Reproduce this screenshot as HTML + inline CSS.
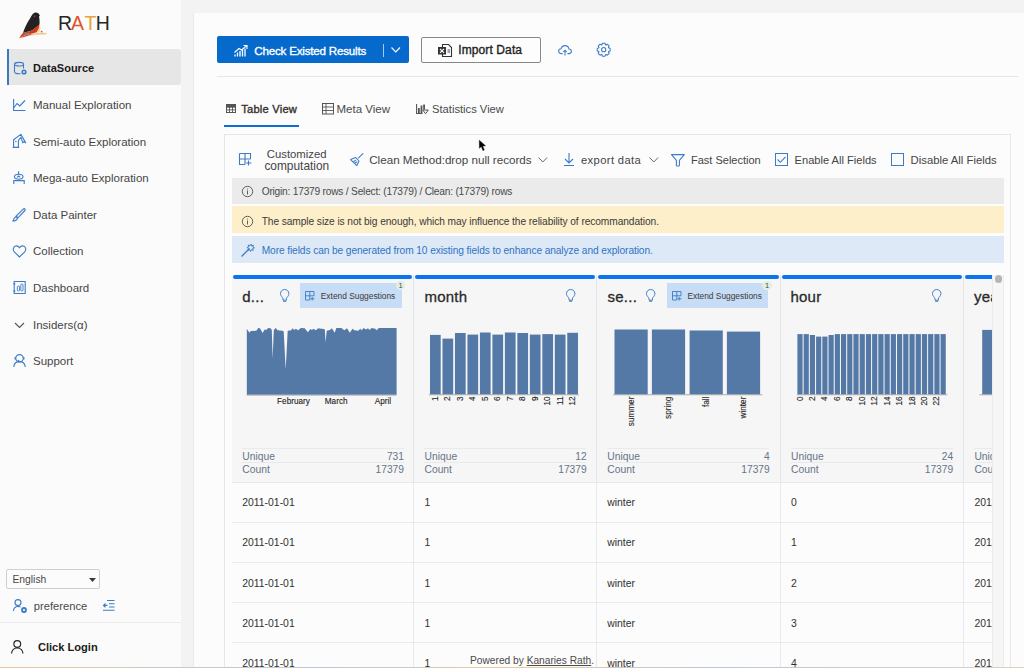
<!DOCTYPE html><html><head><meta charset="utf-8"><style>
html,body{margin:0;padding:0;width:1024px;height:668px;overflow:hidden;background:#f3f3f3;font-family:"Liberation Sans",sans-serif;}
.a{position:absolute;box-sizing:border-box;}
.t{position:absolute;line-height:1;white-space:nowrap;}
svg{position:absolute;overflow:visible;}
</style></head><body>
<div class="a" style="left:0.00px;top:0.00px;width:181.30px;height:668.00px;background:#fbfbfb;"></div>
<svg style="left:14.00px;top:8.00px;" width="36" height="34" viewBox="0 0 36 34"><path d="M15.5 26.5 C20 25.2 26 24.3 33.5 25.2 L31 26.5 L22 26.8 L14 28Z" fill="#efc98f"/>
<path d="M20.5 4.8 C22.5 4.2 24.5 5 25 6.3 L25.9 7.8 L25 8.6 C25.6 11 25.7 14 25.5 16.8 L18 22.5 L9 25 C10 21 13 15 16 10.5 C17.5 7.8 18.8 5.5 20.5 4.8Z" fill="#252122"/>
<path d="M25.5 16.3 C25.7 19 25.5 22 24 24 L18 25.5 L10 27.5 L5.5 29.8 C6.5 27.8 8 26 9 25 L18 22.5 Z" fill="#cf3a1d"/>
<path d="M25.5 15.5 C26.8 18 26.8 21.5 25.3 24 L21.5 25.8 L23.8 22 C25 20 25.5 18 25.5 15.5Z" fill="#f2d6a0"/>
<path d="M4.8 30 L11 27.2 L19.5 25.3 L15 27.5 L8.5 29.5 Z" fill="#de4b22"/>
<ellipse cx="13" cy="25.8" rx="3" ry="0.9" fill="#7d8795" transform="rotate(-12 13 25.8)"/>
<circle cx="27.6" cy="23.6" r="0.9" fill="#d9502a"/>
<circle cx="20.5" cy="8.3" r="0.7" fill="#c9441e"/></svg>
<div class="t" style="left:57.90px;top:14.29px;font-size:19.5px;color:#262626;font-weight:normal;">R</div>
<div class="t" style="left:71.00px;top:14.29px;font-size:19.5px;color:#e0522c;font-weight:normal;">A</div>
<div class="t" style="left:84.60px;top:14.29px;font-size:19.5px;color:#e9a23b;font-weight:normal;">T</div>
<div class="t" style="left:95.70px;top:14.29px;font-size:19.5px;color:#262626;font-weight:normal;">H</div>
<div class="a" style="left:6.60px;top:49.30px;width:174.00px;height:36.20px;background:#e6e6e6;border-radius:0 3px 3px 0;"></div>
<div class="a" style="left:6.60px;top:49.30px;width:2.20px;height:36.20px;background:#3b78c2;"></div>
<div class="t" style="left:33.00px;top:62.99px;font-size:11px;color:#1b1a19;font-weight:bold;">DataSource</div>
<svg style="left:13.50px;top:61.80px;" width="13" height="12" viewBox="0 0 13 12"><ellipse cx="5" cy="2.2" rx="4.5" ry="1.8" fill="none" stroke="#3b7cc9" stroke-width="1.1"/><path d="M0.5 2.2 V9.8 C0.5 11 2.5 11.8 5 11.8 L6.5 11.7 M9.5 2.2 V6.5" fill="none" stroke="#3b7cc9" stroke-width="1.1"/><circle cx="10" cy="10" r="1.8" fill="none" stroke="#3b7cc9" stroke-width="1.6"/></svg>
<div class="t" style="left:33.00px;top:99.97px;font-size:11.5px;color:#464544;font-weight:normal;">Manual Exploration</div>
<svg style="left:12.90px;top:98.60px;" width="13" height="12" viewBox="0 0 13 12"><path d="M0.6 0 V11.5 H12.5 M0.6 9 L4 4.5 L6.8 7 L12 1.5" fill="none" stroke="#3b7cc9" stroke-width="1.1"/></svg>
<div class="t" style="left:33.00px;top:136.57px;font-size:11.5px;color:#464544;font-weight:normal;">Semi-auto Exploration</div>
<svg style="left:12.90px;top:134.20px;" width="13" height="13" viewBox="0 0 13 13"><path d="M-0.3 13.4 H6.2 M0.6 13.4 V5.8 L7.8 0.4 L12.6 8.6 M5.4 13.4 V6.3 L7.9 3.4 L9.8 8.6 M9.2 9 L11 7.8 L13 9" fill="none" stroke="#3b7cc9" stroke-width="1.1" stroke-linejoin="round"/><circle cx="2.9" cy="7.6" r="0.75" fill="#3b7cc9"/></svg>
<div class="t" style="left:33.00px;top:173.17px;font-size:11.5px;color:#464544;font-weight:normal;">Mega-auto Exploration</div>
<svg style="left:12.90px;top:171.00px;" width="12" height="13" viewBox="0 0 12 13"><path d="M5.6 0.3 V2.9 M0.8 13 V9.6 H11.2 V13 M4 6.4 L5.6 5 L7.2 6.4" fill="none" stroke="#3b7cc9" stroke-width="1.1"/><ellipse cx="5.7" cy="5.8" rx="4.3" ry="2.5" fill="none" stroke="#3b7cc9" stroke-width="1.1"/></svg>
<div class="t" style="left:33.00px;top:209.77px;font-size:11.5px;color:#464544;font-weight:normal;">Data Painter</div>
<svg style="left:12.90px;top:207.50px;" width="13" height="13" viewBox="0 0 13 13"><path d="M11.8 0.8 C12.5 1.5 12 2.5 11 3.5 L5 9.8 L3.2 8 L9.5 1.8 C10.3 1 11.2 0.3 11.8 0.8Z M3 8.5 L4.5 10 C4 12 2 13 0 13 C0.5 11.5 1.2 9.5 3 8.5Z" fill="none" stroke="#3b7cc9" stroke-width="1.1"/></svg>
<div class="t" style="left:33.00px;top:246.37px;font-size:11.5px;color:#464544;font-weight:normal;">Collection</div>
<svg style="left:12.90px;top:244.80px;" width="13" height="12" viewBox="0 0 13 12"><path d="M6.5 12 L1.3 6.8 C-0.3 5.2 0 2.3 2 1.3 C3.8 0.4 5.5 1.2 6.5 2.7 C7.5 1.2 9.2 0.4 11 1.3 C13 2.3 13.3 5.2 11.7 6.8Z" fill="none" stroke="#3b7cc9" stroke-width="1.1"/></svg>
<div class="t" style="left:33.00px;top:282.97px;font-size:11.5px;color:#464544;font-weight:normal;">Dashboard</div>
<svg style="left:13.10px;top:280.50px;" width="13" height="13" viewBox="0 0 13 13"><path d="M1.2 0.5 H12.2 V12.5 H1.2Z M0 3 H2.5 M0 10 H2.5" fill="none" stroke="#3b7cc9" stroke-width="1.1"/><rect x="4.3" y="5" width="2.2" height="5" rx="1" fill="none" stroke="#3b7cc9" stroke-width="0.9"/><rect x="7.8" y="3" width="2.2" height="7" rx="1" fill="none" stroke="#3b7cc9" stroke-width="0.9"/></svg>
<div class="t" style="left:33.00px;top:319.57px;font-size:11.5px;color:#464544;font-weight:normal;">Insiders(α)</div>
<svg style="left:13.50px;top:322.00px;" width="11" height="7" viewBox="0 0 11 7"><path d="M1 1 L5.5 5.5 L10 1" fill="none" stroke="#555" stroke-width="1.1"/></svg>
<div class="t" style="left:33.00px;top:356.17px;font-size:11.5px;color:#464544;font-weight:normal;">Support</div>
<svg style="left:12.90px;top:354.00px;" width="13" height="13" viewBox="0 0 13 13"><path d="M0.8 13 C1 9.5 3.5 7.6 6.5 7.6 C9.5 7.6 12 9.5 12.2 13" fill="none" stroke="#3b7cc9" stroke-width="1.1"/><circle cx="6.5" cy="4.3" r="3.7" fill="none" stroke="#3b7cc9" stroke-width="1.1"/><path d="M2.2 3 V5.6 M10.8 3 V5.6 M6.5 7.6 L4.8 6.2" stroke="#3b7cc9" stroke-width="1.3"/></svg>
<div class="a" style="left:6.20px;top:568.80px;width:93.80px;height:20.00px;border:1px solid #cfcfcf;background:#fcfcfc;border-radius:2px;"></div>
<div class="t" style="left:12.50px;top:574.58px;font-size:10.3px;color:#4a4a4a;font-weight:normal;">English</div>
<svg style="left:88.50px;top:577.50px;" width="7" height="4" viewBox="0 0 7 4"><path d="M0 0 H7 L3.5 4Z" fill="#3a3a3a"/></svg>
<svg style="left:12.50px;top:598.80px;" width="14" height="14" viewBox="0 0 14 14"><circle cx="5" cy="3.6" r="3" fill="none" stroke="#3b7cc9" stroke-width="1.1"/><path d="M0.5 12 C0.7 8.8 2.5 7.5 5 7.5 C6 7.5 7 7.7 7.6 8.2" fill="none" stroke="#3b7cc9" stroke-width="1.1"/><circle cx="11" cy="11" r="2" fill="none" stroke="#3b7cc9" stroke-width="1.8"/></svg>
<div class="t" style="left:33.80px;top:600.82px;font-size:11.2px;color:#4a4a4a;font-weight:normal;">preference</div>
<svg style="left:102.50px;top:600.00px;" width="12" height="11" viewBox="0 0 12 11"><path d="M4 0.5 H11.5 M6 3.8 H11.5 M6 7 H11.5 M0 10.3 H11.5 M0.5 5.4 H4.5 M2.5 3.5 L0.5 5.4 L2.5 7.3" fill="none" stroke="#3b7cc9" stroke-width="1.1"/></svg>
<div class="a" style="left:0.00px;top:621.50px;width:181.30px;height:1.00px;background:#ebebeb;"></div>
<svg style="left:11.20px;top:640.00px;" width="13" height="14" viewBox="0 0 13 14"><circle cx="6.25" cy="4" r="3.4" fill="none" stroke="#2b2b2b" stroke-width="1.2"/><path d="M0.5 13.5 C1 9.8 3.3 8 6.25 8 C9.2 8 11.5 9.8 12 13.5" fill="none" stroke="#2b2b2b" stroke-width="1.2"/></svg>
<div class="t" style="left:37.90px;top:641.90px;font-size:11.1px;color:#1b1a19;font-weight:bold;">Click Login</div>
<div class="a" style="left:193.30px;top:13.00px;width:830.70px;height:655.00px;background:#fcfcfc;border-left:1px solid #e9e9e9;"></div>
<div class="a" style="left:217.30px;top:36.40px;width:191.70px;height:26.40px;background:#066acd;border-radius:2px;"></div>
<svg style="left:233.50px;top:44.50px;" width="14" height="12" viewBox="0 0 14 12"><path d="M1 11.5 V9.5 M3.5 11.5 V7.5 M6 11.5 V6 M8.5 11.5 V4.5 M11 11.5 V3.5" stroke="#fff" stroke-width="1.3"/><path d="M0.5 7.5 L5 3.5 L7.5 5 L12.5 0.8 M9.5 0.5 H13 V4" fill="none" stroke="#fff" stroke-width="1.1"/></svg>
<div class="t" style="left:254.30px;top:44.88px;font-size:11.6px;color:#ffffff;font-weight:normal;letter-spacing:-0.2px;-webkit-text-stroke:0.35px #fff;">Check Existed Results</div>
<div class="a" style="left:382.50px;top:43.50px;width:1.20px;height:13.00px;background:#a9c9ee;"></div>
<svg style="left:391.40px;top:47.00px;" width="9.5" height="5.5" viewBox="0 0 9.5 5.5"><path d="M0.5 0.5 L4.75 5 L9 0.5" fill="none" stroke="#fff" stroke-width="1.1"/></svg>
<div class="a" style="left:421.00px;top:36.60px;width:119.50px;height:26.60px;border:1px solid #8a8886;border-radius:2px;background:#fdfdfd;"></div>
<svg style="left:438.00px;top:43.50px;" width="14" height="13" viewBox="0 0 14 13"><path d="M4.5 0.5 H10.5 L13.5 3.5 V12.5 H4.5Z" fill="none" stroke="#333" stroke-width="1.1"/><rect x="0" y="3" width="8" height="7.5" fill="#333"/><path d="M2 4.8 L6 8.8 M6 4.8 L2 8.8" stroke="#fff" stroke-width="1.2"/><path d="M9.5 6 H12 M9.5 8 H12" stroke="#333" stroke-width="0.9"/></svg>
<div class="t" style="left:458.30px;top:44.24px;font-size:12px;color:#201f1e;font-weight:normal;letter-spacing:0.1px;-webkit-text-stroke:0.35px #201f1e;">Import Data</div>
<svg style="left:558.20px;top:45.20px;" width="14" height="10.5" viewBox="0 0 14 10.5"><path d="M4.6 8.6 H3.2 C1.7 8.6 0.6 7.5 0.6 6.1 C0.6 4.7 1.7 3.7 3.1 3.7 C3.5 1.8 5.1 0.6 7 0.6 C9.1 0.6 10.7 2.1 10.9 4 C12.3 4.1 13.4 5 13.4 6.3 C13.4 7.6 12.4 8.6 11 8.6 H9.4 M7 10.5 V5.3 M5.2 7 L7 5.2 L8.8 7" fill="none" stroke="#3b7cc9" stroke-width="1.05"/></svg>
<svg style="left:597.00px;top:43.20px;" width="13.4" height="13.4" viewBox="0 0 13.4 13.4"><path d="M11.57 4.87 L13.17 5.39 L13.17 8.01 L11.57 8.53 L11.44 8.85 L12.20 10.35 L10.35 12.20 L8.85 11.44 L8.53 11.57 L8.01 13.17 L5.39 13.17 L4.87 11.57 L4.55 11.44 L3.05 12.20 L1.20 10.35 L1.96 8.85 L1.83 8.53 L0.23 8.01 L0.23 5.39 L1.83 4.87 L1.96 4.55 L1.20 3.05 L3.05 1.20 L4.55 1.96 L4.87 1.83 L5.39 0.23 L8.01 0.23 L8.53 1.83 L8.85 1.96 L10.35 1.20 L12.20 3.05 L11.44 4.55Z" fill="none" stroke="#3b7cc9" stroke-width="1.05" stroke-linejoin="round"/><circle cx="6.7" cy="6.7" r="2.1" fill="none" stroke="#3b7cc9" stroke-width="1.05"/></svg>
<div class="a" style="left:217.00px;top:76.30px;width:801.00px;height:1.00px;background:#e6e6e6;"></div>
<svg style="left:226.00px;top:104.00px;" width="10" height="9" viewBox="0 0 10 9"><rect x="0.5" y="0.5" width="9" height="8" fill="none" stroke="#555" stroke-width="1"/><path d="M0.5 3.2 H9.5 M0.5 5.9 H9.5 M3.5 0.5 V8.5 M6.5 0.5 V8.5" stroke="#555" stroke-width="0.9"/><rect x="0.5" y="0.5" width="9" height="2.7" fill="#555"/></svg>
<div class="t" style="left:241.20px;top:103.52px;font-size:11.2px;color:#323130;font-weight:normal;letter-spacing:0.2px;-webkit-text-stroke:0.35px #323130;">Table View</div>
<div class="a" style="left:223.90px;top:125.30px;width:75.00px;height:2.00px;background:#0f6cd0;"></div>
<svg style="left:321.50px;top:102.50px;" width="12" height="11.5" viewBox="0 0 12 11.5"><rect x="0.5" y="0.5" width="11" height="10.5" fill="none" stroke="#555" stroke-width="1"/><path d="M0.5 4 H11.5 M0.5 7.5 H11.5 M4 0.5 V11" stroke="#555" stroke-width="0.9"/></svg>
<div class="t" style="left:336.50px;top:103.77px;font-size:11.5px;color:#4a4a4a;font-weight:normal;">Meta View</div>
<svg style="left:416.00px;top:104.00px;" width="12.5" height="10" viewBox="0 0 12.5 10"><path d="M0.6 0 V9.5 H6.5" fill="none" stroke="#555" stroke-width="1.1"/><rect x="2" y="4" width="1.8" height="5" fill="#555"/><rect x="4.6" y="1.5" width="1.8" height="7.5" fill="#555"/><rect x="7.2" y="0.5" width="1.8" height="5" fill="#555"/><path d="M6.8 6 H12.3 L9.55 9.8Z" fill="none" stroke="#555" stroke-width="1"/></svg>
<div class="t" style="left:432.00px;top:103.82px;font-size:11.2px;color:#4a4a4a;font-weight:normal;">Statistics View</div>
<div class="a" style="left:224.30px;top:133.50px;width:787.00px;height:540.00px;border:1px solid #e6e6e6;background:#fcfcfc;"></div>
<svg style="left:239.10px;top:153.00px;" width="13" height="13" viewBox="0 0 13 13"><path d="M0.5 0.5 H11.5 V6 M0.5 0.5 V11.5 H6 M6 0.5 V11.5 M0.5 6 H11.5 M9.5 7.5 V12.5 M7 10 H12.5" fill="none" stroke="#3b7cc9" stroke-width="1.1"/></svg>
<div class="t" style="left:266.80px;top:149.23px;font-size:11.3px;color:#444444;font-weight:normal;">Customized</div>
<div class="t" style="left:264.40px;top:160.53px;font-size:11.9px;color:#444444;font-weight:normal;">computation</div>
<svg style="left:349.50px;top:153.00px;" width="13.5" height="13" viewBox="0 0 13.5 13"><path d="M13.2 0.3 L8 5.3 M5.6 4.6 L9 8 L6.8 12.6 L0.6 6.6 Z M3.2 8.8 L6 7.3 M4.6 10.3 L7.2 8.8" fill="none" stroke="#3b7cc9" stroke-width="1.05" stroke-linejoin="round"/></svg>
<div class="t" style="left:369.20px;top:154.24px;font-size:11.65px;color:#444444;font-weight:normal;">Clean Method:drop null records</div>
<svg style="left:538.40px;top:157.20px;" width="9.6" height="5.5" viewBox="0 0 9.6 5.5"><path d="M0.5 0.5 L4.8 5 L9.1 0.5" fill="none" stroke="#666" stroke-width="1"/></svg>
<svg style="left:563.80px;top:153.00px;" width="10" height="13" viewBox="0 0 10 13"><path d="M5 0 V10 M1 6 L5 10 L9 6 M0 12.5 H10" fill="none" stroke="#3b7cc9" stroke-width="1.1"/></svg>
<div class="t" style="left:581.00px;top:155.32px;font-size:11.2px;color:#444444;font-weight:normal;letter-spacing:0.38px;">export data</div>
<svg style="left:648.90px;top:157.20px;" width="9.6" height="5.5" viewBox="0 0 9.6 5.5"><path d="M0.5 0.5 L4.8 5 L9.1 0.5" fill="none" stroke="#666" stroke-width="1"/></svg>
<svg style="left:671.20px;top:153.50px;" width="13.8" height="12.5" viewBox="0 0 13.8 12.5"><path d="M0.5 0.6 H13.3 L8.4 6.3 V11.3 Q8.4 12 7.7 12 H6.1 Q5.4 12 5.4 11.3 V6.3 Z" fill="none" stroke="#3b7cc9" stroke-width="1.1" stroke-linejoin="round"/></svg>
<div class="t" style="left:691.00px;top:154.79px;font-size:11px;color:#444444;font-weight:normal;">Fast Selection</div>
<div class="a" style="left:774.70px;top:152.70px;width:13.70px;height:13.70px;border:1px solid #3b7cc9;"></div>
<svg style="left:777.00px;top:156.00px;" width="9" height="7" viewBox="0 0 9 7"><path d="M0.5 3.5 L3.3 6.3 L8.5 0.8" fill="none" stroke="#3b7cc9" stroke-width="1.1"/></svg>
<div class="t" style="left:794.60px;top:154.70px;font-size:11.1px;color:#444444;font-weight:normal;">Enable All Fields</div>
<div class="a" style="left:890.70px;top:152.70px;width:13.60px;height:13.70px;border:1px solid #3b7cc9;"></div>
<div class="t" style="left:910.60px;top:154.53px;font-size:11.3px;color:#444444;font-weight:normal;">Disable All Fields</div>
<div class="a" style="left:231.70px;top:178.10px;width:772.00px;height:26.20px;background:#ebebec;"></div>
<svg style="left:241.30px;top:186.00px;" width="13" height="11" viewBox="0 0 13 11"><circle cx="6.5" cy="5.5" r="5.2" fill="none" stroke="#605e5c" stroke-width="1"/><path d="M6.5 4.5 V8.5" stroke="#605e5c" stroke-width="1"/><circle cx="6.5" cy="3" r="0.6" fill="#605e5c"/></svg>
<div class="t" style="left:261.70px;top:187.37px;font-size:10.2px;color:#4a4a4a;font-weight:normal;letter-spacing:-0.22px;">Origin: 17379 rows / Select: (17379) / Clean: (17379) rows</div>
<div class="a" style="left:231.70px;top:206.30px;width:772.00px;height:27.10px;background:#fcefc9;"></div>
<svg style="left:241.30px;top:215.50px;" width="13" height="11" viewBox="0 0 13 11"><circle cx="6.5" cy="5.5" r="5.2" fill="none" stroke="#605e5c" stroke-width="1"/><path d="M6.5 4.5 V8.5" stroke="#605e5c" stroke-width="1"/><circle cx="6.5" cy="3" r="0.6" fill="#605e5c"/></svg>
<div class="t" style="left:261.70px;top:216.57px;font-size:10.2px;color:#3b3a39;font-weight:normal;letter-spacing:-0.08px;">The sample size is not big enough, which may influence the reliability of recommandation.</div>
<div class="a" style="left:231.70px;top:235.70px;width:772.00px;height:27.00px;background:#dde9f6;"></div>
<svg style="left:240.50px;top:242.50px;" width="14" height="14" viewBox="0 0 14 14"><path d="M0.5 13.5 L8.5 5.5" stroke="#3b7cc9" stroke-width="1.3"/><path d="M10 1 L10.6 3 L12.5 2.2 L11.7 4 L13.5 4.8 L11.6 5.5 L12.3 7.4 L10.4 6.7 L9.6 8.5 L8.9 6.6 L7 7.3 L7.7 5.4 L5.9 4.6 L7.8 3.9 L7.1 2 L9 2.8Z" fill="none" stroke="#3b7cc9" stroke-width="0.9"/></svg>
<div class="t" style="left:261.70px;top:245.67px;font-size:10.2px;color:#2f74c4;font-weight:normal;letter-spacing:-0.1px;">More fields can be generated from 10 existing fields to enhance analyze and exploration.</div>
<div class="a" style="left:231.6px;top:264px;width:761px;height:404px;overflow:hidden;">
<div class="a" style="left:-0.30px;top:11.00px;width:183.95px;height:207.50px;background:#f6f6f6;border-left:1px solid #e3e6e9;"></div>
<div class="a" style="left:1.30px;top:11.10px;width:179.40px;height:3.70px;background:#0b74ee;border-radius:2px;"></div>
<div class="t" style="left:10.70px;top:25.10px;font-size:15px;color:#2a2a2a;font-weight:normal;letter-spacing:0.25px;-webkit-text-stroke:0.3px #2a2a2a;">d...</div>
<div class="a" style="left:10.70px;top:184.20px;width:162.00px;height:1.00px;background:#e9eaeb;"></div>
<div class="a" style="left:10.70px;top:198.30px;width:162.00px;height:1.00px;background:#e9eaeb;"></div>
<div class="t" style="left:10.70px;top:187.98px;font-size:10.3px;color:#667487;font-weight:normal;">Unique</div>
<div class="t" style="left:10.70px;top:200.88px;font-size:10.3px;color:#667487;font-weight:normal;">Count</div>
<div class="a" style="left:181.90px;top:11.00px;width:183.95px;height:207.50px;background:#f6f6f6;border-left:1px solid #e3e6e9;"></div>
<div class="a" style="left:183.50px;top:11.10px;width:180.00px;height:3.70px;background:#0b74ee;border-radius:2px;"></div>
<div class="t" style="left:192.80px;top:25.10px;font-size:15px;color:#2a2a2a;font-weight:normal;letter-spacing:0.25px;-webkit-text-stroke:0.3px #2a2a2a;">month</div>
<div class="a" style="left:192.90px;top:184.20px;width:162.00px;height:1.00px;background:#e9eaeb;"></div>
<div class="a" style="left:192.90px;top:198.30px;width:162.00px;height:1.00px;background:#e9eaeb;"></div>
<div class="t" style="left:192.90px;top:187.98px;font-size:10.3px;color:#667487;font-weight:normal;">Unique</div>
<div class="t" style="left:192.90px;top:200.88px;font-size:10.3px;color:#667487;font-weight:normal;">Count</div>
<div class="a" style="left:364.70px;top:11.00px;width:183.95px;height:207.50px;background:#f6f6f6;border-left:1px solid #e3e6e9;"></div>
<div class="a" style="left:366.30px;top:11.10px;width:181.00px;height:3.70px;background:#0b74ee;border-radius:2px;"></div>
<div class="t" style="left:375.90px;top:25.10px;font-size:15px;color:#2a2a2a;font-weight:normal;letter-spacing:0.25px;-webkit-text-stroke:0.3px #2a2a2a;">se...</div>
<div class="a" style="left:375.70px;top:184.20px;width:162.00px;height:1.00px;background:#e9eaeb;"></div>
<div class="a" style="left:375.70px;top:198.30px;width:162.00px;height:1.00px;background:#e9eaeb;"></div>
<div class="t" style="left:375.70px;top:187.98px;font-size:10.3px;color:#667487;font-weight:normal;">Unique</div>
<div class="t" style="left:375.70px;top:200.88px;font-size:10.3px;color:#667487;font-weight:normal;">Count</div>
<div class="a" style="left:548.50px;top:11.00px;width:183.95px;height:207.50px;background:#f6f6f6;border-left:1px solid #e3e6e9;"></div>
<div class="a" style="left:550.10px;top:11.10px;width:180.50px;height:3.70px;background:#0b74ee;border-radius:2px;"></div>
<div class="t" style="left:558.80px;top:25.10px;font-size:15px;color:#2a2a2a;font-weight:normal;letter-spacing:0.25px;-webkit-text-stroke:0.3px #2a2a2a;">hour</div>
<div class="a" style="left:559.50px;top:184.20px;width:162.00px;height:1.00px;background:#e9eaeb;"></div>
<div class="a" style="left:559.50px;top:198.30px;width:162.00px;height:1.00px;background:#e9eaeb;"></div>
<div class="t" style="left:559.50px;top:187.98px;font-size:10.3px;color:#667487;font-weight:normal;">Unique</div>
<div class="t" style="left:559.50px;top:200.88px;font-size:10.3px;color:#667487;font-weight:normal;">Count</div>
<div class="a" style="left:731.80px;top:11.00px;width:183.95px;height:207.50px;background:#f6f6f6;border-left:1px solid #e3e6e9;"></div>
<div class="a" style="left:733.40px;top:11.10px;width:133.80px;height:3.70px;background:#0b74ee;border-radius:2px;"></div>
<div class="t" style="left:742.30px;top:25.10px;font-size:15px;color:#2a2a2a;font-weight:normal;letter-spacing:0.25px;-webkit-text-stroke:0.3px #2a2a2a;">yea</div>
<div class="a" style="left:742.80px;top:184.20px;width:162.00px;height:1.00px;background:#e9eaeb;"></div>
<div class="a" style="left:742.80px;top:198.30px;width:162.00px;height:1.00px;background:#e9eaeb;"></div>
<div class="t" style="left:742.80px;top:187.98px;font-size:10.3px;color:#667487;font-weight:normal;">Unique</div>
<div class="t" style="left:742.80px;top:200.88px;font-size:10.3px;color:#667487;font-weight:normal;">Count</div>
<div class="t" style="left:-127.70px;width:300px;text-align:right;top:188.07px;font-size:10.2px;color:#667487;font-weight:normal;">731</div>
<div class="t" style="left:-127.70px;width:300px;text-align:right;top:200.97px;font-size:10.2px;color:#667487;font-weight:normal;">17379</div>
<div class="t" style="left:55.00px;width:300px;text-align:right;top:188.07px;font-size:10.2px;color:#667487;font-weight:normal;">12</div>
<div class="t" style="left:55.00px;width:300px;text-align:right;top:200.97px;font-size:10.2px;color:#667487;font-weight:normal;">17379</div>
<div class="t" style="left:238.10px;width:300px;text-align:right;top:188.07px;font-size:10.2px;color:#667487;font-weight:normal;">4</div>
<div class="t" style="left:238.10px;width:300px;text-align:right;top:200.97px;font-size:10.2px;color:#667487;font-weight:normal;">17379</div>
<div class="t" style="left:421.50px;width:300px;text-align:right;top:188.07px;font-size:10.2px;color:#667487;font-weight:normal;">24</div>
<div class="t" style="left:421.50px;width:300px;text-align:right;top:200.97px;font-size:10.2px;color:#667487;font-weight:normal;">17379</div>
<svg style="left:48.30px;top:25.00px;" width="9.4" height="13" viewBox="0 0 9.4 13"><path d="M4.7 0.5 C2.3 0.5 0.5 2.3 0.5 4.6 C0.5 6.2 1.4 7.3 2.3 8.3 C2.8 8.9 3 9.4 3 10 V11.2 H6.4 V10 C6.4 9.4 6.6 8.9 7.1 8.3 C8 7.3 8.9 6.2 8.9 4.6 C8.9 2.3 7.1 0.5 4.7 0.5Z M3.2 12.3 H6.2" fill="none" stroke="#3b7cc9" stroke-width="1"/></svg>
<svg style="left:334.40px;top:25.00px;" width="9.4" height="13" viewBox="0 0 9.4 13"><path d="M4.7 0.5 C2.3 0.5 0.5 2.3 0.5 4.6 C0.5 6.2 1.4 7.3 2.3 8.3 C2.8 8.9 3 9.4 3 10 V11.2 H6.4 V10 C6.4 9.4 6.6 8.9 7.1 8.3 C8 7.3 8.9 6.2 8.9 4.6 C8.9 2.3 7.1 0.5 4.7 0.5Z M3.2 12.3 H6.2" fill="none" stroke="#3b7cc9" stroke-width="1"/></svg>
<svg style="left:414.40px;top:25.00px;" width="9.4" height="13" viewBox="0 0 9.4 13"><path d="M4.7 0.5 C2.3 0.5 0.5 2.3 0.5 4.6 C0.5 6.2 1.4 7.3 2.3 8.3 C2.8 8.9 3 9.4 3 10 V11.2 H6.4 V10 C6.4 9.4 6.6 8.9 7.1 8.3 C8 7.3 8.9 6.2 8.9 4.6 C8.9 2.3 7.1 0.5 4.7 0.5Z M3.2 12.3 H6.2" fill="none" stroke="#3b7cc9" stroke-width="1"/></svg>
<svg style="left:700.40px;top:25.00px;" width="9.4" height="13" viewBox="0 0 9.4 13"><path d="M4.7 0.5 C2.3 0.5 0.5 2.3 0.5 4.6 C0.5 6.2 1.4 7.3 2.3 8.3 C2.8 8.9 3 9.4 3 10 V11.2 H6.4 V10 C6.4 9.4 6.6 8.9 7.1 8.3 C8 7.3 8.9 6.2 8.9 4.6 C8.9 2.3 7.1 0.5 4.7 0.5Z M3.2 12.3 H6.2" fill="none" stroke="#3b7cc9" stroke-width="1"/></svg>
<div class="a" style="left:68.60px;top:19.40px;width:101.40px;height:24.40px;background:#c7dcf5;"></div>
<svg style="left:73.60px;top:27.30px;" width="10" height="9.5" viewBox="0 0 10 9.5"><path d="M0.5 0.5 H9 V4.8 M0.5 0.5 V9 H4.8 M4.8 0.5 V9 M0.5 4.8 H9 M7.2 6 V9.5 M5.5 7.8 H9.5" fill="none" stroke="#3b7cc9" stroke-width="0.9"/></svg>
<div class="t" style="left:89.20px;top:27.99px;font-size:8.4px;color:#3b3a39;font-weight:normal;">Extend Suggestions</div>
<div class="a" style="left:164.20px;top:16.80px;width:9.60px;height:9.40px;background:#e6ece6;border-radius:50%;"></div>
<div class="t" style="left:166.80px;top:17.95px;font-size:7.5px;color:#2f5f2f;font-weight:normal;">1</div>
<div class="a" style="left:435.20px;top:19.40px;width:101.40px;height:24.40px;background:#c7dcf5;"></div>
<svg style="left:440.20px;top:27.30px;" width="10" height="9.5" viewBox="0 0 10 9.5"><path d="M0.5 0.5 H9 V4.8 M0.5 0.5 V9 H4.8 M4.8 0.5 V9 M0.5 4.8 H9 M7.2 6 V9.5 M5.5 7.8 H9.5" fill="none" stroke="#3b7cc9" stroke-width="0.9"/></svg>
<div class="t" style="left:455.80px;top:27.99px;font-size:8.4px;color:#3b3a39;font-weight:normal;">Extend Suggestions</div>
<div class="a" style="left:530.80px;top:16.80px;width:9.60px;height:9.40px;background:#e6ece6;border-radius:50%;"></div>
<div class="t" style="left:533.40px;top:17.95px;font-size:7.5px;color:#2f5f2f;font-weight:normal;">1</div>
<svg style="left:0;top:0" width="761" height="404" font-family="Liberation Sans"><path d="M14.80 130.70 L14.80 65.10 L17.60 68.70 L18.70 67.10 L24.30 66.70 L26.30 64.00 L27.90 64.30 L30.70 69.10 L32.60 65.50 L34.20 65.90 L36.20 64.00 L38.60 64.30 L39.80 65.90 L40.60 94.50 L41.80 65.90 L43.70 64.00 L45.70 66.30 L50.50 66.70 L51.70 67.50 L53.70 105.60 L55.70 66.70 L59.20 66.30 L60.40 64.30 L62.40 65.90 L63.60 64.70 L66.40 66.30 L68.70 64.00 L72.70 64.30 L75.90 68.30 L78.30 65.10 L79.90 65.90 L81.40 64.70 L83.80 66.30 L86.20 64.30 L89.40 64.70 L92.00 65.10 L92.80 65.50 L93.60 78.60 L94.70 66.70 L97.90 65.90 L99.90 64.30 L102.70 68.70 L104.30 64.00 L109.40 64.00 L112.20 66.30 L115.00 64.30 L117.80 68.70 L120.50 64.70 L122.50 66.30 L126.50 66.70 L128.10 64.70 L129.70 66.30 L131.70 64.00 L134.00 65.50 L136.00 64.30 L137.60 65.90 L139.60 64.00 L143.20 64.70 L144.70 66.30 L146.70 64.00 L164.60 64.00 L164.60 130.70Z" fill="#5579a6"/><rect x="14.80" y="130.70" width="149.80" height="0.8" fill="#999"/><text x="45.10" y="139.60" font-size="8.2" fill="#222" stroke="#222" stroke-width="0.1">February</text><text x="92.80" y="139.60" font-size="8.2" fill="#222" stroke="#222" stroke-width="0.1">March</text><text x="142.80" y="139.60" font-size="8.2" fill="#222" stroke="#222" stroke-width="0.1">April</text><rect x="198.00" y="70.90" width="10.7" height="59.50" fill="#5579a6"/><text transform="translate(203.35,132.40) rotate(-90)" text-anchor="end" dominant-baseline="central" font-size="8.2" fill="#222" stroke="#222" stroke-width="0.1">1</text><rect x="210.48" y="74.60" width="10.7" height="55.80" fill="#5579a6"/><text transform="translate(215.83,132.40) rotate(-90)" text-anchor="end" dominant-baseline="central" font-size="8.2" fill="#222" stroke="#222" stroke-width="0.1">2</text><rect x="222.96" y="69.00" width="10.7" height="61.40" fill="#5579a6"/><text transform="translate(228.31,132.40) rotate(-90)" text-anchor="end" dominant-baseline="central" font-size="8.2" fill="#222" stroke="#222" stroke-width="0.1">3</text><rect x="235.44" y="70.60" width="10.7" height="59.80" fill="#5579a6"/><text transform="translate(240.79,132.40) rotate(-90)" text-anchor="end" dominant-baseline="central" font-size="8.2" fill="#222" stroke="#222" stroke-width="0.1">4</text><rect x="247.92" y="68.50" width="10.7" height="61.90" fill="#5579a6"/><text transform="translate(253.27,132.40) rotate(-90)" text-anchor="end" dominant-baseline="central" font-size="8.2" fill="#222" stroke="#222" stroke-width="0.1">5</text><rect x="260.40" y="70.60" width="10.7" height="59.80" fill="#5579a6"/><text transform="translate(265.75,132.40) rotate(-90)" text-anchor="end" dominant-baseline="central" font-size="8.2" fill="#222" stroke="#222" stroke-width="0.1">6</text><rect x="272.88" y="68.50" width="10.7" height="61.90" fill="#5579a6"/><text transform="translate(278.23,132.40) rotate(-90)" text-anchor="end" dominant-baseline="central" font-size="8.2" fill="#222" stroke="#222" stroke-width="0.1">7</text><rect x="285.36" y="69.00" width="10.7" height="61.40" fill="#5579a6"/><text transform="translate(290.71,132.40) rotate(-90)" text-anchor="end" dominant-baseline="central" font-size="8.2" fill="#222" stroke="#222" stroke-width="0.1">8</text><rect x="297.84" y="70.60" width="10.7" height="59.80" fill="#5579a6"/><text transform="translate(303.19,132.40) rotate(-90)" text-anchor="end" dominant-baseline="central" font-size="8.2" fill="#222" stroke="#222" stroke-width="0.1">9</text><rect x="310.32" y="70.10" width="10.7" height="60.30" fill="#5579a6"/><text transform="translate(315.67,132.40) rotate(-90)" text-anchor="end" dominant-baseline="central" font-size="8.2" fill="#222" stroke="#222" stroke-width="0.1">10</text><rect x="322.80" y="70.60" width="10.7" height="59.80" fill="#5579a6"/><text transform="translate(328.15,132.40) rotate(-90)" text-anchor="end" dominant-baseline="central" font-size="8.2" fill="#222" stroke="#222" stroke-width="0.1">11</text><rect x="335.28" y="68.80" width="10.7" height="61.60" fill="#5579a6"/><text transform="translate(340.63,132.40) rotate(-90)" text-anchor="end" dominant-baseline="central" font-size="8.2" fill="#222" stroke="#222" stroke-width="0.1">12</text><rect x="196.90" y="130.40" width="150" height="0.8" fill="#999"/><rect x="382.50" y="65.50" width="33.2" height="64.90" fill="#5579a6"/><text transform="translate(399.10,132.60) rotate(-90)" text-anchor="end" dominant-baseline="central" font-size="8.2" fill="#222" stroke="#222" stroke-width="0.1">summer</text><rect x="419.90" y="65.50" width="33.2" height="64.90" fill="#5579a6"/><text transform="translate(436.50,132.60) rotate(-90)" text-anchor="end" dominant-baseline="central" font-size="8.2" fill="#222" stroke="#222" stroke-width="0.1">spring</text><rect x="457.60" y="66.50" width="33.2" height="63.90" fill="#5579a6"/><text transform="translate(474.20,132.60) rotate(-90)" text-anchor="end" dominant-baseline="central" font-size="8.2" fill="#222" stroke="#222" stroke-width="0.1">fall</text><rect x="494.90" y="67.60" width="33.2" height="62.80" fill="#5579a6"/><text transform="translate(511.50,132.60) rotate(-90)" text-anchor="end" dominant-baseline="central" font-size="8.2" fill="#222" stroke="#222" stroke-width="0.1">winter</text><rect x="380.90" y="130.40" width="149.4" height="0.8" fill="#999"/><rect x="565.40" y="70.10" width="5.2" height="60.30" fill="#5579a6"/><text transform="translate(568.00,132.40) rotate(-90)" text-anchor="end" dominant-baseline="central" font-size="8.2" fill="#222" stroke="#222" stroke-width="0.1">0</text><rect x="571.62" y="70.10" width="5.2" height="60.30" fill="#5579a6"/><rect x="577.85" y="71.00" width="5.2" height="59.40" fill="#5579a6"/><text transform="translate(580.45,132.40) rotate(-90)" text-anchor="end" dominant-baseline="central" font-size="8.2" fill="#222" stroke="#222" stroke-width="0.1">2</text><rect x="584.07" y="72.60" width="5.2" height="57.80" fill="#5579a6"/><rect x="590.30" y="72.60" width="5.2" height="57.80" fill="#5579a6"/><text transform="translate(592.90,132.40) rotate(-90)" text-anchor="end" dominant-baseline="central" font-size="8.2" fill="#222" stroke="#222" stroke-width="0.1">4</text><rect x="596.52" y="71.00" width="5.2" height="59.40" fill="#5579a6"/><rect x="602.75" y="70.10" width="5.2" height="60.30" fill="#5579a6"/><text transform="translate(605.35,132.40) rotate(-90)" text-anchor="end" dominant-baseline="central" font-size="8.2" fill="#222" stroke="#222" stroke-width="0.1">6</text><rect x="608.98" y="70.10" width="5.2" height="60.30" fill="#5579a6"/><rect x="615.20" y="70.10" width="5.2" height="60.30" fill="#5579a6"/><text transform="translate(617.80,132.40) rotate(-90)" text-anchor="end" dominant-baseline="central" font-size="8.2" fill="#222" stroke="#222" stroke-width="0.1">8</text><rect x="621.42" y="70.10" width="5.2" height="60.30" fill="#5579a6"/><rect x="627.65" y="70.10" width="5.2" height="60.30" fill="#5579a6"/><text transform="translate(630.25,132.40) rotate(-90)" text-anchor="end" dominant-baseline="central" font-size="8.2" fill="#222" stroke="#222" stroke-width="0.1">10</text><rect x="633.88" y="70.10" width="5.2" height="60.30" fill="#5579a6"/><rect x="640.10" y="70.10" width="5.2" height="60.30" fill="#5579a6"/><text transform="translate(642.70,132.40) rotate(-90)" text-anchor="end" dominant-baseline="central" font-size="8.2" fill="#222" stroke="#222" stroke-width="0.1">12</text><rect x="646.32" y="70.10" width="5.2" height="60.30" fill="#5579a6"/><rect x="652.55" y="70.10" width="5.2" height="60.30" fill="#5579a6"/><text transform="translate(655.15,132.40) rotate(-90)" text-anchor="end" dominant-baseline="central" font-size="8.2" fill="#222" stroke="#222" stroke-width="0.1">14</text><rect x="658.77" y="70.10" width="5.2" height="60.30" fill="#5579a6"/><rect x="665.00" y="70.10" width="5.2" height="60.30" fill="#5579a6"/><text transform="translate(667.60,132.40) rotate(-90)" text-anchor="end" dominant-baseline="central" font-size="8.2" fill="#222" stroke="#222" stroke-width="0.1">16</text><rect x="671.23" y="70.10" width="5.2" height="60.30" fill="#5579a6"/><rect x="677.45" y="70.10" width="5.2" height="60.30" fill="#5579a6"/><text transform="translate(680.05,132.40) rotate(-90)" text-anchor="end" dominant-baseline="central" font-size="8.2" fill="#222" stroke="#222" stroke-width="0.1">18</text><rect x="683.67" y="70.10" width="5.2" height="60.30" fill="#5579a6"/><rect x="689.90" y="70.10" width="5.2" height="60.30" fill="#5579a6"/><text transform="translate(692.50,132.40) rotate(-90)" text-anchor="end" dominant-baseline="central" font-size="8.2" fill="#222" stroke="#222" stroke-width="0.1">20</text><rect x="696.12" y="70.10" width="5.2" height="60.30" fill="#5579a6"/><rect x="702.35" y="70.10" width="5.2" height="60.30" fill="#5579a6"/><text transform="translate(704.95,132.40) rotate(-90)" text-anchor="end" dominant-baseline="central" font-size="8.2" fill="#222" stroke="#222" stroke-width="0.1">22</text><rect x="708.57" y="70.10" width="5.2" height="60.30" fill="#5579a6"/><rect x="564.90" y="130.40" width="150.5" height="0.8" fill="#999"/><rect x="750.20" y="65.90" width="20" height="64.50" fill="#5579a6"/><rect x="747.40" y="130.40" width="20" height="0.8" fill="#999"/></svg>
<div class="a" style="left:-0.30px;top:218.20px;width:761.00px;height:40.05px;background:#fcfcfc;border-top:1px solid #e8e9eb;"></div>
<div class="a" style="left:-0.30px;top:258.25px;width:761.00px;height:40.05px;background:#fcfcfc;border-top:1px solid #e8e9eb;"></div>
<div class="a" style="left:-0.30px;top:298.30px;width:761.00px;height:40.05px;background:#fcfcfc;border-top:1px solid #e8e9eb;"></div>
<div class="a" style="left:-0.30px;top:338.35px;width:761.00px;height:40.05px;background:#fcfcfc;border-top:1px solid #e8e9eb;"></div>
<div class="a" style="left:-0.30px;top:378.40px;width:761.00px;height:40.05px;background:#fcfcfc;border-top:1px solid #e8e9eb;"></div>
<div class="a" style="left:-0.30px;top:218.50px;width:1.00px;height:200.00px;background:#e8e9eb;"></div>
<div class="a" style="left:181.90px;top:218.50px;width:1.00px;height:200.00px;background:#e8e9eb;"></div>
<div class="a" style="left:364.70px;top:218.50px;width:1.00px;height:200.00px;background:#e8e9eb;"></div>
<div class="a" style="left:548.50px;top:218.50px;width:1.00px;height:200.00px;background:#e8e9eb;"></div>
<div class="a" style="left:731.80px;top:218.50px;width:1.00px;height:200.00px;background:#e8e9eb;"></div>
<div class="t" style="left:10.70px;top:234.40px;font-size:10.4px;color:#323130;font-weight:normal;">2011-01-01</div>
<div class="t" style="left:192.90px;top:234.40px;font-size:10.4px;color:#323130;font-weight:normal;">1</div>
<div class="t" style="left:375.70px;top:234.40px;font-size:10.4px;color:#323130;font-weight:normal;">winter</div>
<div class="t" style="left:559.50px;top:234.40px;font-size:10.4px;color:#323130;font-weight:normal;">0</div>
<div class="t" style="left:742.80px;top:234.40px;font-size:10.4px;color:#323130;font-weight:normal;">2011-01-01</div>
<div class="t" style="left:10.70px;top:274.45px;font-size:10.4px;color:#323130;font-weight:normal;">2011-01-01</div>
<div class="t" style="left:192.90px;top:274.45px;font-size:10.4px;color:#323130;font-weight:normal;">1</div>
<div class="t" style="left:375.70px;top:274.45px;font-size:10.4px;color:#323130;font-weight:normal;">winter</div>
<div class="t" style="left:559.50px;top:274.45px;font-size:10.4px;color:#323130;font-weight:normal;">1</div>
<div class="t" style="left:742.80px;top:274.45px;font-size:10.4px;color:#323130;font-weight:normal;">2011-01-01</div>
<div class="t" style="left:10.70px;top:314.50px;font-size:10.4px;color:#323130;font-weight:normal;">2011-01-01</div>
<div class="t" style="left:192.90px;top:314.50px;font-size:10.4px;color:#323130;font-weight:normal;">1</div>
<div class="t" style="left:375.70px;top:314.50px;font-size:10.4px;color:#323130;font-weight:normal;">winter</div>
<div class="t" style="left:559.50px;top:314.50px;font-size:10.4px;color:#323130;font-weight:normal;">2</div>
<div class="t" style="left:742.80px;top:314.50px;font-size:10.4px;color:#323130;font-weight:normal;">2011-01-01</div>
<div class="t" style="left:10.70px;top:354.55px;font-size:10.4px;color:#323130;font-weight:normal;">2011-01-01</div>
<div class="t" style="left:192.90px;top:354.55px;font-size:10.4px;color:#323130;font-weight:normal;">1</div>
<div class="t" style="left:375.70px;top:354.55px;font-size:10.4px;color:#323130;font-weight:normal;">winter</div>
<div class="t" style="left:559.50px;top:354.55px;font-size:10.4px;color:#323130;font-weight:normal;">3</div>
<div class="t" style="left:742.80px;top:354.55px;font-size:10.4px;color:#323130;font-weight:normal;">2011-01-01</div>
<div class="t" style="left:10.70px;top:394.60px;font-size:10.4px;color:#323130;font-weight:normal;">2011-01-01</div>
<div class="t" style="left:192.90px;top:394.60px;font-size:10.4px;color:#323130;font-weight:normal;">1</div>
<div class="t" style="left:375.70px;top:394.60px;font-size:10.4px;color:#323130;font-weight:normal;">winter</div>
<div class="t" style="left:559.50px;top:394.60px;font-size:10.4px;color:#323130;font-weight:normal;">4</div>
<div class="t" style="left:742.80px;top:394.60px;font-size:10.4px;color:#323130;font-weight:normal;">2011-01-01</div>
</div>
<div class="a" style="left:992.10px;top:275.00px;width:11.50px;height:393.00px;background:#f6f6f6;border-left:1px solid #ebebeb;border-right:1px solid #ebebeb;"></div>
<div class="a" style="left:995.00px;top:275.00px;width:6.50px;height:8.00px;background:#b5b5b5;border-radius:3.5px;"></div>
<div class="t" style="left:470.00px;top:656.27px;font-size:10.2px;color:#4a4a4a;font-weight:normal;">Powered by <span style="text-decoration:underline">Kanaries Rath</span>.</div>
<div class="a" style="left:0.00px;top:667.00px;width:1024.00px;height:1.00px;background:linear-gradient(90deg,#e8c9a0,#b9c9dc 30%,#e8c9a0 50%,#b9c9dc 70%,#e0d0c0);"></div>
<svg style="left:478.60px;top:139.50px;" width="8" height="12" viewBox="0 0 8 12"><path d="M0.3 0.3 L0.4 8.2 L2.3 6.4 L3.9 10.6 L5.3 10.1 L3.7 5.9 L6.5 5.8 Z" fill="#000" stroke="#000" stroke-width="0.4"/></svg>
</body></html>
